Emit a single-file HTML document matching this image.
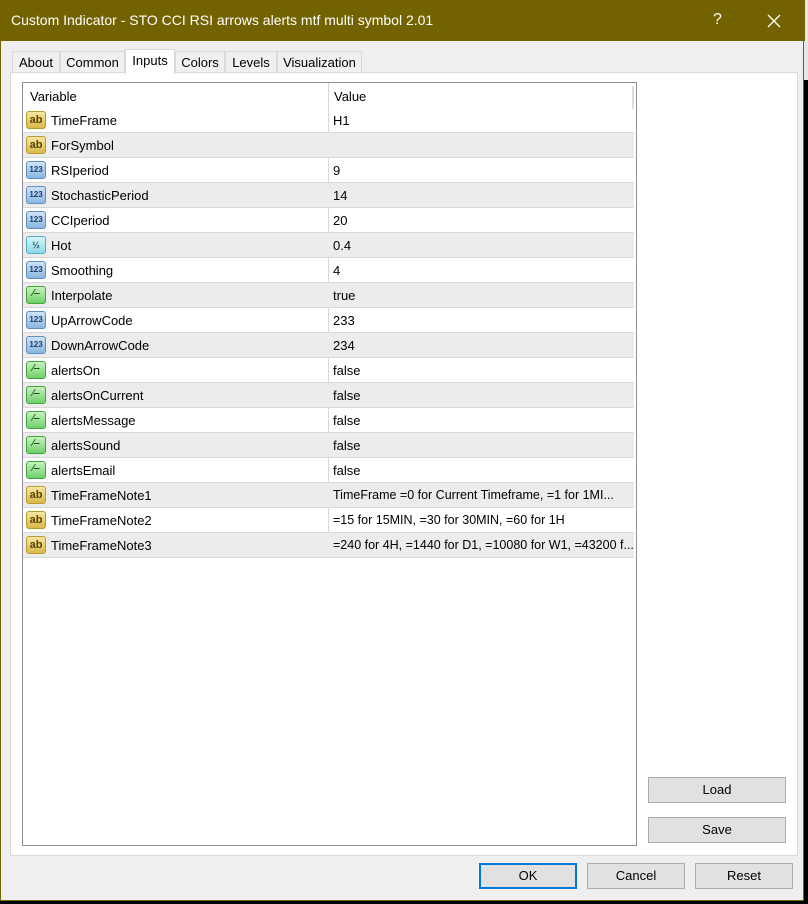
<!DOCTYPE html>
<html><head><meta charset="utf-8"><style>
*{margin:0;padding:0;box-sizing:border-box}
body{width:808px;height:904px;background:#000;position:relative;overflow:hidden;font-family:"Liberation Sans",Arial,sans-serif;font-size:13px;color:#000}
.topright{position:absolute;left:803px;top:0;width:5px;height:80px;background:#e6e6e6}
.win{position:absolute;left:0;top:0;width:804px;height:901px;background:#efefef;border:1px solid #736300;border-top:none}
.title{position:absolute;left:0;top:0;width:804px;height:41px;background:#736300;color:#fff;font-size:14px}
.title .t{position:absolute;left:10px;top:12px}
.title .q{position:absolute;left:712px;top:11px;font-size:16px}
.tab{position:absolute;top:51px;height:22px;border:1px solid #d9d9d9;border-bottom:none;background:#f0f0f0;padding:3px 0 0 0;text-align:center}
.tab.act{top:49px;height:25px;background:#fff;border-color:#d9d9d9;z-index:2}
.panel{position:absolute;left:9px;top:72px;width:788px;height:784px;background:#fff;border:1px solid #d9d9d9}
.tbl{position:absolute;left:21px;top:82px;width:615px;height:764px;border:1px solid #8e8e94;background:#fff;overflow:hidden}
.hdr{position:absolute;left:0;top:0;width:613px;height:25px}
.hdr span{position:absolute;top:6px}
.row{position:absolute;left:0;width:611px;height:25px;border-bottom:1px solid #d8d8d8}
.row.g{background:#ececec}
.row .n{position:absolute;left:28px;top:5px}
.row .v{position:absolute;left:310px;top:5px;white-space:nowrap}
.vline{position:absolute;left:305px;top:0;width:1px;height:475px;background:#d8d8d8}
.ic{position:absolute;left:3px;top:3px;width:20px;height:18px;border-radius:3px;font-size:9px;font-weight:bold;text-align:center;line-height:18px}
.ab{background:linear-gradient(#f6e7a0,#d8b948);border:1px solid #b89a30;color:#5a4500;font-size:11px;line-height:16px}
.n1{background:linear-gradient(#cfe3f6,#8ab6e0);border:1px solid #5e8fc0;color:#1d3f6e;font-size:8px;line-height:16px}
.hf{background:linear-gradient(#d8f4f8,#8ed8e6);border:1px solid #4fb0c4;color:#1b5e6e;font-size:9px;line-height:16px}
.bo{background:linear-gradient(#c8f2c0,#6fd06a);border:1px solid #43a43e;color:#1c5a18;font-size:10px;line-height:14px}
.btn{position:absolute;height:26px;background:#e1e1e1;border:1px solid #adadad;text-align:center;line-height:24px;font-size:13px}
.ok{border:2px solid #0078d7;line-height:22px}
.scr{position:absolute;width:2px;height:23px;background:#ddd}
.sm{font-size:12.5px}
</style></head><body>
<div class="topright"></div>
<div class="win">
 <div class="title"><span class="t">Custom Indicator - STO CCI RSI arrows alerts mtf multi symbol 2.01</span><span class="q">?</span>
 <svg width="14" height="14" viewBox="0 0 14 14" style="position:absolute;left:766px;top:14px"><path d="M1 1L13 13M13 1L1 13" stroke="#fff" stroke-width="1.3"/></svg></div>
 <div class="tab" style="left:11px;width:48px">About</div>
 <div class="tab" style="left:59px;width:65px">Common</div>
 <div class="tab act" style="left:124px;width:50px">Inputs</div>
 <div class="tab" style="left:174px;width:50px">Colors</div>
 <div class="tab" style="left:224px;width:52px">Levels</div>
 <div class="tab" style="left:276px;width:85px">Visualization</div>
 <div class="panel"></div>
 <div class="tbl">
  <div class="hdr"><span style="left:7px">Variable</span><span style="left:311px">Value</span></div>
  <div class="vline"></div>
  <div class="scr" style="left:609px;top:3px"></div>
  <div class="row" style="top:25px"><div class="ic ab">ab</div><span class="n">TimeFrame</span><span class="v">H1</span></div>
  <div class="row g" style="top:50px"><div class="ic ab">ab</div><span class="n">ForSymbol</span><span class="v"></span></div>
  <div class="row" style="top:75px"><div class="ic n1">123</div><span class="n">RSIperiod</span><span class="v">9</span></div>
  <div class="row g" style="top:100px"><div class="ic n1">123</div><span class="n">StochasticPeriod</span><span class="v">14</span></div>
  <div class="row" style="top:125px"><div class="ic n1">123</div><span class="n">CCIperiod</span><span class="v">20</span></div>
  <div class="row g" style="top:150px"><div class="ic hf">½</div><span class="n">Hot</span><span class="v">0.4</span></div>
  <div class="row" style="top:175px"><div class="ic n1">123</div><span class="n">Smoothing</span><span class="v">4</span></div>
  <div class="row g" style="top:200px"><div class="ic bo">⁄‒</div><span class="n">Interpolate</span><span class="v">true</span></div>
  <div class="row" style="top:225px"><div class="ic n1">123</div><span class="n">UpArrowCode</span><span class="v">233</span></div>
  <div class="row g" style="top:250px"><div class="ic n1">123</div><span class="n">DownArrowCode</span><span class="v">234</span></div>
  <div class="row" style="top:275px"><div class="ic bo">⁄‒</div><span class="n">alertsOn</span><span class="v">false</span></div>
  <div class="row g" style="top:300px"><div class="ic bo">⁄‒</div><span class="n">alertsOnCurrent</span><span class="v">false</span></div>
  <div class="row" style="top:325px"><div class="ic bo">⁄‒</div><span class="n">alertsMessage</span><span class="v">false</span></div>
  <div class="row g" style="top:350px"><div class="ic bo">⁄‒</div><span class="n">alertsSound</span><span class="v">false</span></div>
  <div class="row" style="top:375px"><div class="ic bo">⁄‒</div><span class="n">alertsEmail</span><span class="v">false</span></div>
  <div class="row g" style="top:400px"><div class="ic ab">ab</div><span class="n">TimeFrameNote1</span><span class="v sm">TimeFrame =0 for Current Timeframe, =1 for 1MI...</span></div>
  <div class="row" style="top:425px"><div class="ic ab">ab</div><span class="n">TimeFrameNote2</span><span class="v sm">=15 for 15MIN, =30 for 30MIN, =60 for 1H</span></div>
  <div class="row g" style="top:450px"><div class="ic ab">ab</div><span class="n">TimeFrameNote3</span><span class="v sm">=240 for 4H, =1440 for D1, =10080 for W1, =43200 f...</span></div>
 </div>
 <div class="btn" style="left:647px;top:777px;width:138px">Load</div>
 <div class="btn" style="left:647px;top:817px;width:138px">Save</div>
 <div class="btn ok" style="left:478px;top:863px;width:98px">OK</div>
 <div class="btn" style="left:586px;top:863px;width:98px">Cancel</div>
 <div class="btn" style="left:694px;top:863px;width:98px">Reset</div>
</div>
</body></html>
